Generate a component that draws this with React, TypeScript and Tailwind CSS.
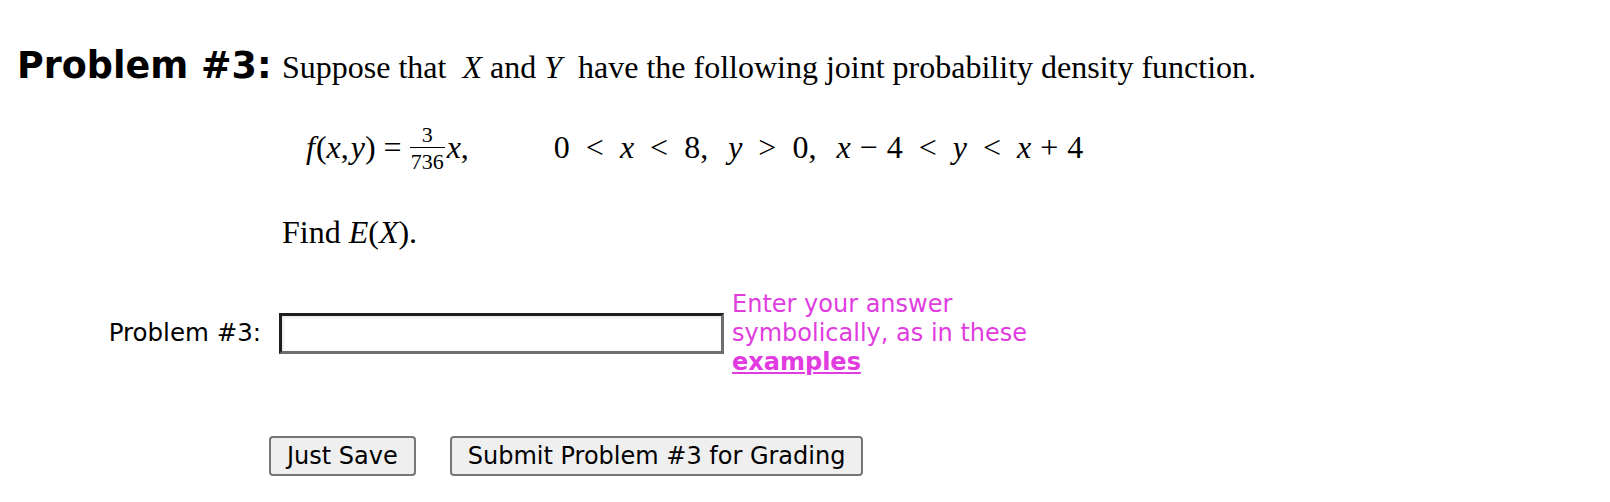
import React from 'react';

const serif = "font-['Liberation_Serif','Times_New_Roman',serif]";
const sans = "font-['DejaVu_Sans','Verdana',sans-serif]";

const I: React.FC<{ children: React.ReactNode }> = ({ children }) => <i className="italic">{children}</i>;
const Rel: React.FC<{ children: React.ReactNode }> = ({ children }) => <span className="mx-[16px]">{children}</span>;
const Bin: React.FC<{ children: React.ReactNode }> = ({ children }) => <span className="mx-[9px]">{children}</span>;

const App: React.FC = () => {
  return (
    <div className="w-[1610px] h-[502px] bg-white text-black overflow-hidden">
      {/* Problem statement */}
      <div className="pt-[48px] pl-[17px] flex items-baseline">
        <h2 className={`${sans} font-bold text-[36.5px] leading-none w-[265px] shrink-0`}>Problem #3:</h2>
        <p className={`${serif} text-[32px] leading-none`}>
          Suppose that&nbsp; <I>X</I> and <I>Y</I>&nbsp; have the following joint probability density function.
        </p>
      </div>

      {/* Equation */}
      <div className={`${serif} text-[32px] leading-none ml-[306px] mt-[46px] flex items-baseline whitespace-pre`}>
        <span>
          <I>f</I>
          <span className="ml-[1px]">(</span>
          <I>x</I>,<span className="ml-[2px]" />
          <I>y</I>)
        </span>
        <span className="mx-[8px]">=</span>
        <span className="inline-flex flex-col items-center text-[22px] relative top-[-16px] mr-[2px]">
          <span className="leading-[25px]">3</span>
          <span className="leading-[27px] border-t border-black px-[1px]">736</span>
        </span>
        <I>x</I>
        <span>,</span>
        <span className="ml-[85px]">0</span>
        <Rel>&lt;</Rel>
        <I>x</I>
        <Rel>&lt;</Rel>
        <span>8,</span>
        <span className="ml-[20px]"><I>y</I></span>
        <Rel>&gt;</Rel>
        <span>0,</span>
        <span className="ml-[20px]"><I>x</I></span>
        <Bin>−</Bin>
        <span>4</span>
        <Rel>&lt;</Rel>
        <I>y</I>
        <Rel>&lt;</Rel>
        <I>x</I>
        <Bin>+</Bin>
        <span>4</span>
      </div>

      <p className={`${serif} text-[32px] leading-none ml-[282px] mt-[25px]`}>
        Find <I>E</I>(<I>X</I>).
      </p>

      {/* Answer row */}
      <div className={`${sans} flex items-center mt-[42px]`}>
        <span className="w-[261px] text-right shrink-0 text-[24.5px]">Problem #3:</span>
        <input
          type="text"
          className="ml-[18px] w-[445px] h-[41px] shrink-0 border-[3px] border-t-[#1e1e1e] border-l-[#1e1e1e] border-b-[#6e6e6e] border-r-[#6e6e6e] bg-white shadow-[inset_1px_1px_3px_rgba(0,0,0,0.12)] outline-none"
        />
        <div className="ml-[8px] text-[24px] text-[#e03ce0] leading-[29px]">
          <div>Enter your answer</div>
          <div>symbolically, as in these</div>
          <a href="#" className="font-bold underline decoration-2 underline-offset-2">examples</a>
        </div>
      </div>

      {/* Buttons */}
      <div className={`${sans} text-[24px] flex items-center gap-[34px] ml-[269px] mt-[59px]`}>
        <button className="h-[40px] px-[16px] bg-[#efefef] border-2 border-[#767676] rounded-[4px] leading-none">Just Save</button>
        <button className="h-[40px] px-[16px] bg-[#efefef] border-2 border-[#767676] rounded-[4px] leading-none">Submit Problem #3 for Grading</button>
      </div>
    </div>
  );
};

export default App;
